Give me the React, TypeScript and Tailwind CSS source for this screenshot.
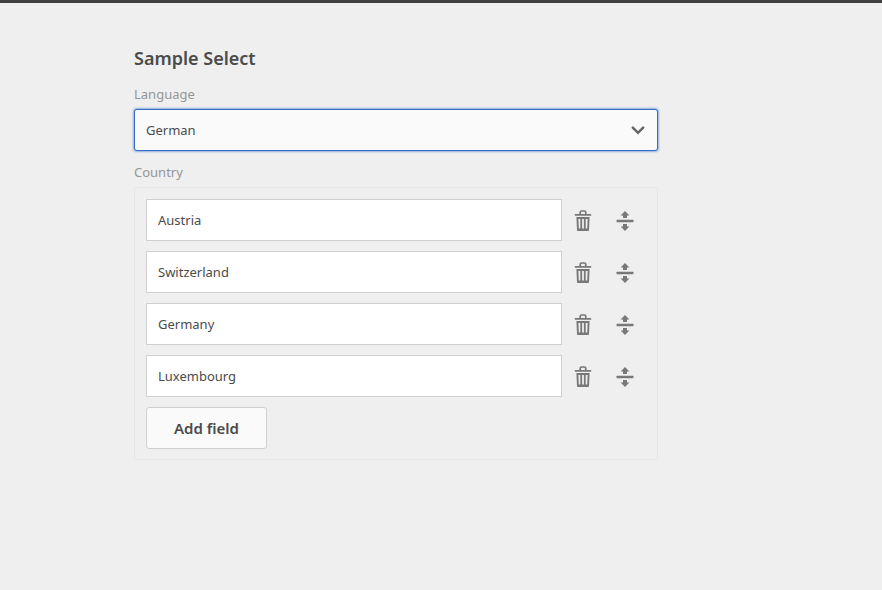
import { useState } from "react";

function TrashIcon() {
  return (
    <svg width="18" height="22" viewBox="0 0 18 22" fill="none" aria-hidden="true">
      <path d="M6.2 4V2.4Q6.2 1 7.6 1h2.8q1.4 0 1.4 1.4V4" stroke="#787878" strokeWidth="1.7" />
      <rect x="0.8" y="4" width="16.4" height="1.8" rx="0.3" fill="#787878" />
      <path
        fillRule="evenodd"
        fill="#787878"
        d="M2.4 7h13.2l-.6 13.2q0 .8-.9.8H3.9q-.9 0-.9-.8ZM4.4 9l.4 9.4h1.5V9ZM8.1 9v9.4h1.8V9ZM11.7 9v9.4h1.5l.4-9.4Z"
      />
    </svg>
  );
}

function ReorderIcon() {
  return (
    <svg width="18" height="22" viewBox="0 0 18 22" fill="#787878" aria-hidden="true">
      <path d="M9 1 13.4 5.6H11V8H7V5.6H4.6Z" />
      <rect x="0.6" y="9.8" width="16.8" height="2.4" rx="0.4" />
      <path d="M9 21 13.4 16.4H11V14H7V16.4H4.6Z" />
    </svg>
  );
}

const iconButton = "flex h-[42px] w-[42px] shrink-0 items-center justify-center pt-0.5";

export default function App() {
  const [language, setLanguage] = useState("German");
  const [countries, setCountries] = useState(["Austria", "Switzerland", "Germany", "Luxembourg"]);

  return (
    <div className="min-h-screen border-t-3 border-[#404040] bg-[#efefef] pt-10 pr-[224px] pb-10 pl-[134px] font-['Noto_Sans','Open_Sans',sans-serif] text-[13px] leading-5 text-[#4b4b4b]">
      <form onSubmit={(e) => e.preventDefault()}>
        <h1 className="text-[18px] leading-[30px] font-semibold">Sample Select</h1>
        <label htmlFor="language" className="mt-[11px] block pb-[5px] text-[#969696]">
          Language
        </label>
        <div className="grid">
          <select
            id="language"
            value={language}
            onChange={(e) => setLanguage(e.target.value)}
            className="col-start-1 row-start-1 h-[42px] w-full appearance-none rounded-[3px] border border-[#326ec8] bg-[#fafafa] px-[11px] shadow-[0_0_2px_1px_#326ec880] outline-none"
          >
            <option>German</option>
            <option>English</option>
            <option>French</option>
          </select>
          <svg
            className="pointer-events-none col-start-1 row-start-1 mr-[13px] self-center justify-self-end"
            width="14"
            height="10"
            viewBox="0 0 14 10"
            fill="none"
            aria-hidden="true"
          >
            <path d="M1.8 2.6 7 7.8 12.2 2.6" stroke="#646464" strokeWidth="2.5" strokeLinecap="round" />
          </svg>
        </div>
        <fieldset>
          <legend className="pt-[11px] pb-[5px] text-[#969696]">Country</legend>
          <div className="flex flex-col gap-2.5 border border-[#e7e7e7] px-[11px] pt-[11px] pb-2.5">
            {countries.map((country, index) => (
              <div key={index} className="flex">
                <input
                  type="text"
                  aria-label={`Country ${index + 1}`}
                  value={country}
                  onChange={(e) =>
                    setCountries(countries.map((c, i) => (i === index ? e.target.value : c)))
                  }
                  className="h-[42px] min-w-0 flex-1 border border-[#d0d0d0] bg-white px-[11px] outline-none"
                />
                <button
                  type="button"
                  aria-label="Delete"
                  className={iconButton}
                  onClick={() => setCountries(countries.filter((_, i) => i !== index))}
                >
                  <TrashIcon />
                </button>
                <button type="button" aria-label="Reorder" className={iconButton}>
                  <ReorderIcon />
                </button>
              </div>
            ))}
            <button
              type="button"
              onClick={() => setCountries([...countries, ""])}
              className="h-[42px] self-start rounded-[3px] border border-[#d0d0d0] bg-[#fafafa] px-[27px] text-[15px] font-semibold"
            >
              Add field
            </button>
          </div>
        </fieldset>
      </form>
    </div>
  );
}
